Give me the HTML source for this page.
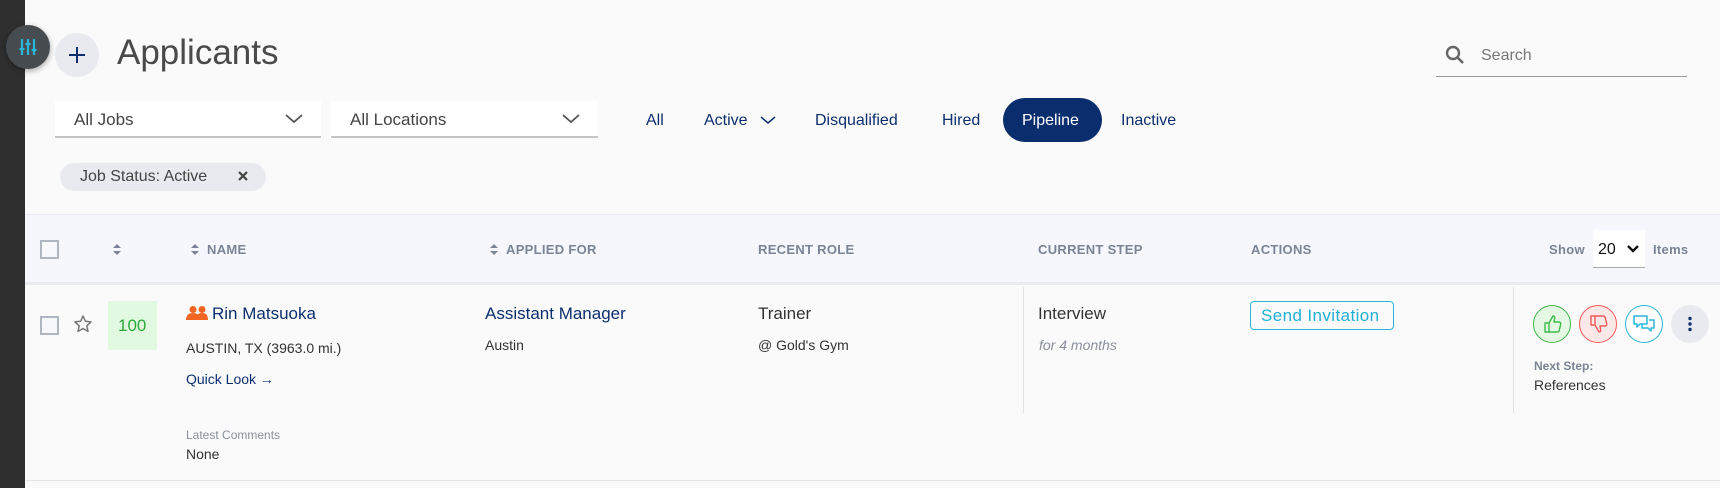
<!DOCTYPE html>
<html><head><meta charset="utf-8"><style>
*{box-sizing:border-box;margin:0;padding:0}
body{width:1720px;height:488px;overflow:hidden;background:#fafafa;font-family:"Liberation Sans",Arial,sans-serif;position:relative;color:#333}
.a{position:absolute;white-space:nowrap}
.navy{color:#0d2f6e}
.hd{font-size:13px;font-weight:bold;color:#7b8494;letter-spacing:.3px;top:242px}
.dd{background:#fff;border-bottom:2px solid #c4c4c4;height:37px;top:101px}
.dd span{position:absolute;left:19px;top:9px;font-size:17px;color:#444}
.dd svg{position:absolute;right:18px;top:13px}
.tab{top:112px;font-size:16px;color:#0d2f6e}
.cb{border:2px solid #b0b6c0;background:#f7f8fc;width:19px;height:19px}
.rb{width:38px;height:38px;border-radius:50%;top:305px}
</style></head><body>
<div class="a" style="left:0;top:0;width:25px;height:488px;background:#2f2f2f"></div>
<div class="a" style="left:6px;top:25px;width:44px;height:44px;border-radius:50%;background:#474c51;box-shadow:0 2px 6px rgba(0,0,0,.35)">
<svg width="44" height="44" viewBox="0 0 44 44"><g stroke="#29b6d8" stroke-width="2.2"><line x1="16" y1="14" x2="16" y2="30"/><line x1="22" y1="14" x2="22" y2="30"/><line x1="28" y1="14" x2="28" y2="30"/><line x1="13.5" y1="24" x2="18.5" y2="24"/><line x1="19.5" y1="19" x2="24.5" y2="19"/><line x1="25.5" y1="25" x2="30.5" y2="25"/></g></svg></div>
<div class="a" style="left:55px;top:33px;width:44px;height:44px;border-radius:50%;background:#e8eaf0">
<svg width="44" height="44"><g stroke="#0d2f6e" stroke-width="2"><line x1="22" y1="14" x2="22" y2="30"/><line x1="14" y1="22" x2="30" y2="22"/></g></svg></div>
<div class="a" style="left:117px;top:33px;font-size:35px;color:#4a4a4a">Applicants</div>
<svg class="a" style="left:1445px;top:45px" width="20" height="20"><circle cx="8" cy="8" r="6" stroke="#666" stroke-width="2.4" fill="none"/><line x1="12.5" y1="12.5" x2="18" y2="18" stroke="#666" stroke-width="2.6"/></svg>
<div class="a" style="left:1481px;top:47px;font-size:16px;color:#777">Search</div>
<div class="a" style="left:1436px;top:76px;width:251px;height:1px;background:#999"></div>
<div class="a dd" style="left:55px;width:266px"><span>All Jobs</span><svg width="18" height="10"><path d="M1 1l8 7 8-7" stroke="#555" stroke-width="1.8" fill="none"/></svg></div>
<div class="a dd" style="left:331px;width:267px"><span>All Locations</span><svg width="18" height="10"><path d="M1 1l8 7 8-7" stroke="#555" stroke-width="1.8" fill="none"/></svg></div>
<div class="a tab" style="left:646px">All</div>
<div class="a tab" style="left:704px">Active</div>
<svg class="a" style="left:760px;top:116px" width="16" height="10"><path d="M1 1l7 6 7-6" stroke="#0d2f6e" stroke-width="1.5" fill="none"/></svg>
<div class="a tab" style="left:815px">Disqualified</div>
<div class="a tab" style="left:942px">Hired</div>
<div class="a" style="left:1003px;top:98px;width:99px;height:44px;border-radius:22px;background:#0a2d6e"></div>
<div class="a tab" style="left:1022px;color:#fff">Pipeline</div>
<div class="a tab" style="left:1121px">Inactive</div>
<div class="a" style="left:60px;top:163px;width:206px;height:28px;border-radius:14px;background:#e8eaef"></div>
<div class="a" style="left:80px;top:168px;font-size:16px;color:#444">Job Status: Active</div>
<svg class="a" style="left:237px;top:170px" width="12" height="12"><path d="M2 2l8 8M10 2l-8 8" stroke="#444" stroke-width="2.2"/></svg>
<div class="a" style="left:25px;top:214px;width:1695px;height:71px;background:#f5f7fc;border-top:1px solid #e8eaf0;border-bottom:3px solid #e9ebf0"></div>
<div class="a cb" style="left:40px;top:240px"></div>
<svg class="a" style="left:112px;top:243px" width="10" height="13"><path d="M1 5l4-4 4 4zM1 8l4 4 4-4z" fill="#7b8494"/></svg>
<svg class="a" style="left:190px;top:243px" width="10" height="13"><path d="M1 5l4-4 4 4zM1 8l4 4 4-4z" fill="#7b8494"/></svg>
<div class="a hd" style="left:207px">NAME</div>
<svg class="a" style="left:489px;top:243px" width="10" height="13"><path d="M1 5l4-4 4 4zM1 8l4 4 4-4z" fill="#7b8494"/></svg>
<div class="a hd" style="left:506px">APPLIED FOR</div>
<div class="a hd" style="left:758px">RECENT ROLE</div>
<div class="a hd" style="left:1038px">CURRENT STEP</div>
<div class="a hd" style="left:1251px">ACTIONS</div>
<div class="a hd" style="left:1549px">Show</div>
<div class="a" style="left:1593px;top:230px;width:52px;height:38px;background:#fff;border-bottom:1px solid #aaa"></div>
<div class="a" style="left:1598px;top:241px;font-size:16px;color:#111">20</div>
<svg class="a" style="left:1627px;top:245px" width="12" height="9"><path d="M1 1l5 5 5-5" stroke="#111" stroke-width="2.4" fill="none"/></svg>
<div class="a hd" style="left:1653px">Items</div>
<div class="a" style="left:25px;top:480px;width:1695px;height:1px;background:#e2e4e8"></div>
<div class="a" style="left:1023px;top:287px;width:1px;height:126px;background:#e3e3e3"></div>
<div class="a" style="left:1513px;top:287px;width:1px;height:126px;background:#e3e3e3"></div>
<div class="a cb" style="left:40px;top:316px"></div>
<svg class="a" style="left:73px;top:314px" width="20" height="20"><path d="M10 2l2.4 5.3 5.7.6-4.3 3.9 1.2 5.6L10 14.5 5 17.4l1.2-5.6L1.9 7.9l5.7-.6z" fill="none" stroke="#777" stroke-width="1.5" stroke-linejoin="round"/></svg>
<div class="a" style="left:108px;top:301px;width:49px;height:49px;background:#e0f9e0"></div>
<div class="a" style="left:118px;top:316px;font-size:17px;color:#2eaa3a">100</div>
<svg class="a" style="left:186px;top:305px" width="22" height="16"><g fill="#f26522"><circle cx="7" cy="4.5" r="3.5"/><circle cx="16" cy="4.5" r="3.5"/><path d="M0 15c0-5 3-7 7-7s7 2 7 7z"/><path d="M10 15c0-5 2-7 6-7s6 2 6 7z"/></g></svg>
<div class="a navy" style="left:212px;top:304px;font-size:17px">Rin Matsuoka</div>
<div class="a" style="left:186px;top:340px;font-size:14px;color:#333">AUSTIN, TX (3963.0 mi.)</div>
<div class="a navy" style="left:186px;top:371px;font-size:14px">Quick Look →</div>
<div class="a" style="left:186px;top:428px;font-size:12px;color:#8a909a">Latest Comments</div>
<div class="a" style="left:186px;top:446px;font-size:14px;color:#333">None</div>
<div class="a navy" style="left:485px;top:304px;font-size:17px">Assistant Manager</div>
<div class="a" style="left:485px;top:337px;font-size:14px;color:#333">Austin</div>
<div class="a" style="left:758px;top:304px;font-size:17px;color:#333">Trainer</div>
<div class="a" style="left:758px;top:337px;font-size:14px;color:#333">@ Gold's Gym</div>
<div class="a" style="left:1038px;top:304px;font-size:17px;color:#333">Interview</div>
<div class="a" style="left:1039px;top:337px;font-size:14px;font-style:italic;color:#8a909a">for 4 months</div>
<div class="a" style="left:1250px;top:301px;width:144px;height:29px;border:1.5px solid #29b6d8;border-radius:4px"></div>
<div class="a" style="left:1261px;top:306px;font-size:17px;color:#1fb0d4;letter-spacing:.4px">Send Invitation</div>
<div class="a rb" style="left:1533px;border:1.5px solid #3fb94a;background:#e4f8e4"><svg width="36" height="36"><path d="M11 17h4v9h-4zM15 17l4-7c1.5 0 2 1 1.6 2.6L20 16h5c1.3 0 2 1 1.7 2.2l-1.5 6.2c-.3 1-1 1.6-2 1.6H15" fill="none" stroke="#3fb94a" stroke-width="1.4" stroke-linejoin="round"/></svg></div>
<div class="a rb" style="left:1579px;border:1.5px solid #f05a5a;background:#fde8e8"><svg width="36" height="36"><path d="M11 10h4v9h-4zM15 19l4 7c1.5 0 2-1 1.6-2.6L20 20h5c1.3 0 2-1 1.7-2.2l-1.5-6.2c-.3-1-1-1.6-2-1.6H15" fill="none" stroke="#f05a5a" stroke-width="1.4" stroke-linejoin="round"/></svg></div>
<div class="a rb" style="left:1625px;border:1.5px solid #29b6d8;background:#fff"><svg width="36" height="36"><path d="M8 10h13v8h-7l-3 3v-3H8z" fill="none" stroke="#29b6d8" stroke-width="1.5" stroke-linejoin="round"/><path d="M23 14h5v8h-3v3l-3-3h-6v-4" fill="none" stroke="#29b6d8" stroke-width="1.5" stroke-linejoin="round"/></svg></div>
<div class="a rb" style="left:1671px;background:#e8eaef"><svg width="38" height="38"><g fill="#0d2f6e"><circle cx="19" cy="13.5" r="1.7"/><circle cx="19" cy="19" r="1.7"/><circle cx="19" cy="24.5" r="1.7"/></g></svg></div>
<div class="a" style="left:1534px;top:359px;font-size:12px;font-weight:bold;color:#7b8494">Next Step:</div>
<div class="a" style="left:1534px;top:377px;font-size:14px;color:#333">References</div>
</body></html>
